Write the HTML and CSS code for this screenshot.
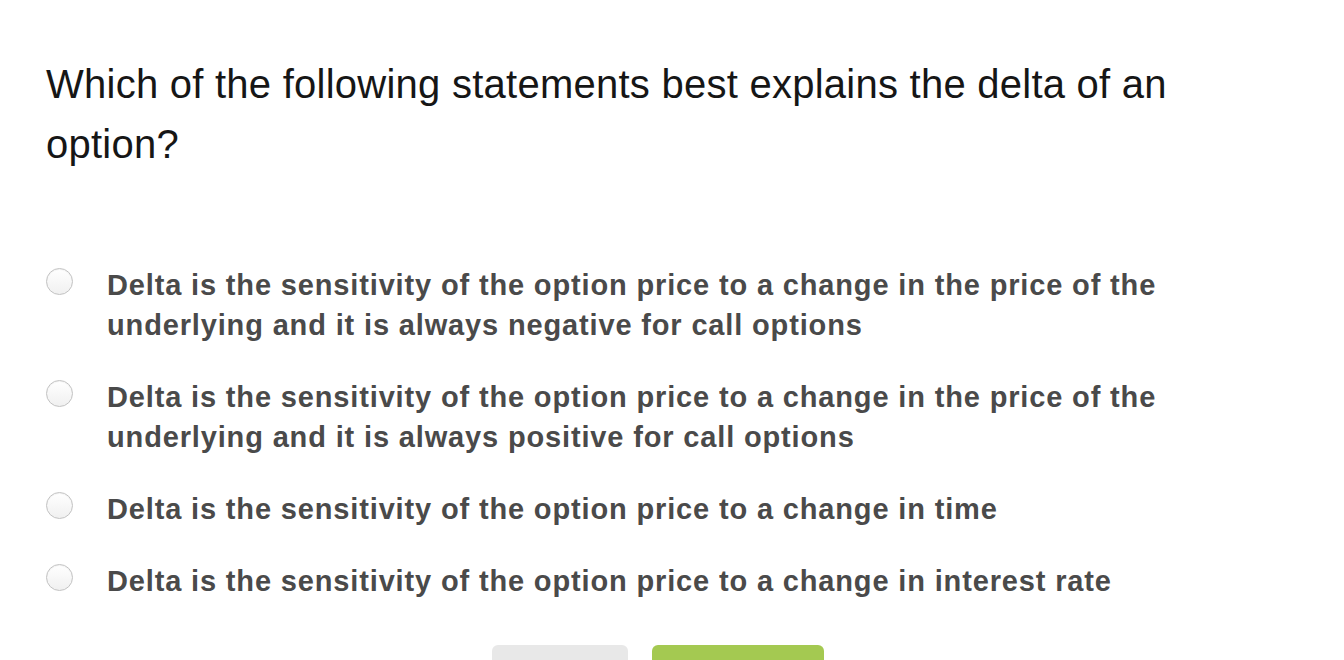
FILE: index.html
```html
<!DOCTYPE html>
<html>
<head>
<meta charset="utf-8">
<link rel="stylesheet" href="styles.css">
</head>
<body>
<div class="quiz">
  <h1 class="question">Which of the following statements best explains the delta of an option?</h1>
  <ul class="options">
    <li class="option"><span class="radio"></span><span class="label">Delta is the sensitivity of the option price to a change in the price of the underlying and it is always negative for call options</span></li>
    <li class="option"><span class="radio"></span><span class="label">Delta is the sensitivity of the option price to a change in the price of the underlying and it is always positive for call options</span></li>
    <li class="option"><span class="radio"></span><span class="label">Delta is the sensitivity of the option price to a change in time</span></li>
    <li class="option"><span class="radio"></span><span class="label">Delta is the sensitivity of the option price to a change in interest rate</span></li>
  </ul>
  <div class="actions">
    <button class="btn btn-gray"></button>
    <button class="btn btn-green"></button>
  </div>
</div>
</body>
</html>
```
FILE: styles.css
```css
html, body {
  margin: 0;
  padding: 0;
  background: #ffffff;
  overflow: hidden;
}
body {
  font-family: "Liberation Sans", Arial, Helvetica, sans-serif;
}
.quiz {
  width: 1224px;
  padding: 54px 0 0 46px;
}
.question {
  margin: 0;
  font-size: 40px;
  font-weight: normal;
  line-height: 60px;
  letter-spacing: 0.25px;
  color: #161616;
}
.options {
  list-style: none;
  margin: 91px 0 0 0;
  padding: 0;
  display: flex;
  flex-direction: column;
  gap: 32px;
}
.option {
  display: flex;
  align-items: flex-start;
}
.radio {
  flex: none;
  box-sizing: border-box;
  width: 27px;
  height: 27px;
  margin: 3px 34px 0 0;
  border: 1px solid #c2c2c2;
  border-radius: 50%;
  background: linear-gradient(#ffffff, #f0f0f0);
  box-shadow: inset 0 1px 1px rgba(0,0,0,0.05);
}
.label {
  font-size: 29px;
  font-weight: bold;
  line-height: 40px;
  letter-spacing: 0.85px;
  color: #4a4a4a;
}
.actions {
  display: flex;
  justify-content: center;
  gap: 24px;
  margin-top: 44px;
}
.btn {
  height: 50px;
  border: none;
  border-radius: 6px;
  padding: 0;
}
.btn-gray {
  width: 136px;
  background: #e8e8e8;
}
.btn-green {
  width: 172px;
  background: #a4c951;
}
```
